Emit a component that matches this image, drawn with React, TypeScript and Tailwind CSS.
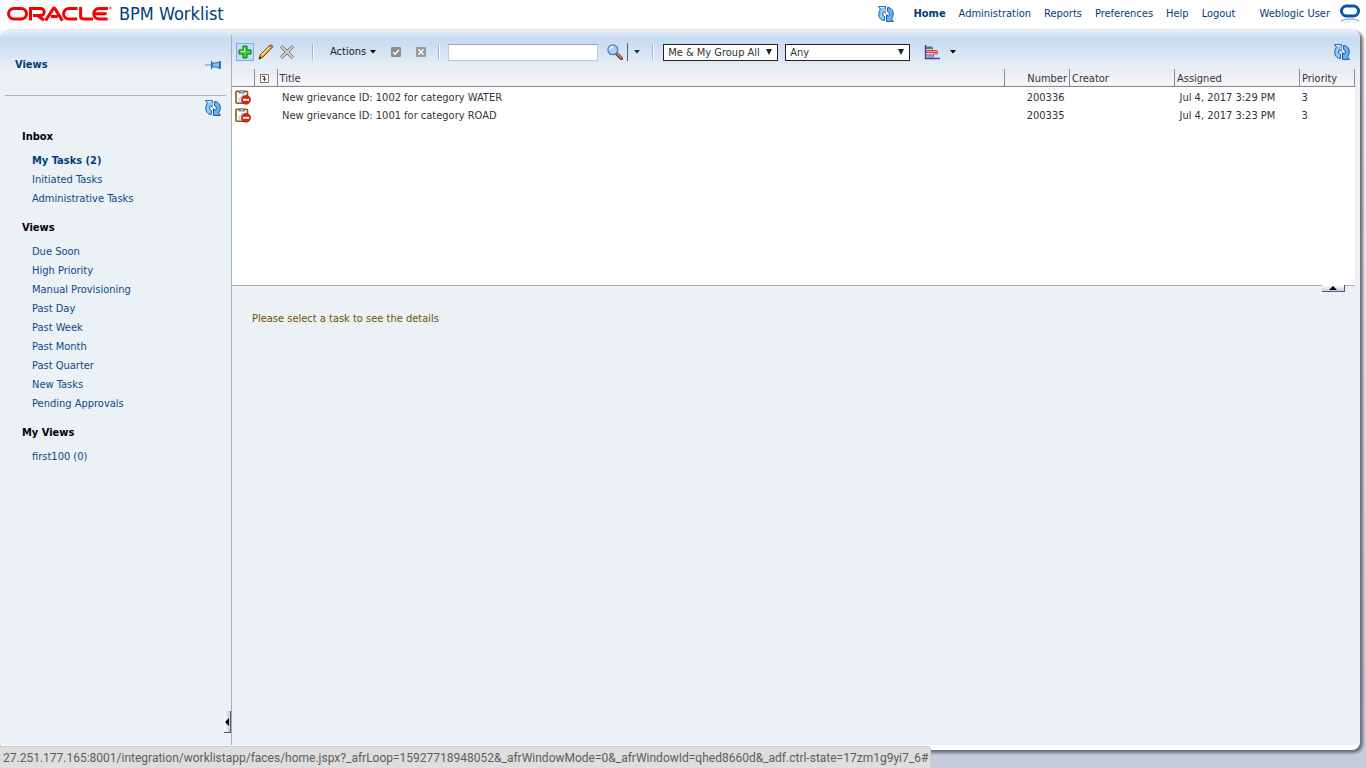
import type { ReactNode } from 'react';

interface IconProps {
  className?: string;
}

interface Task {
  id: string;
  title: string;
  creator: string;
  assigned: string;
  priority: number;
}

interface ViewGroup {
  title: string;
  items: string[];
}

const navLinks = ['Home', 'Administration', 'Reports', 'Preferences', 'Help', 'Logout'];

const viewGroups: ViewGroup[] = [
  { title: 'Inbox', items: ['My Tasks (2)', 'Initiated Tasks', 'Administrative Tasks'] },
  {
    title: 'Views',
    items: [
      'Due Soon',
      'High Priority',
      'Manual Provisioning',
      'Past Day',
      'Past Week',
      'Past Month',
      'Past Quarter',
      'New Tasks',
      'Pending Approvals',
    ],
  },
  { title: 'My Views', items: ['first100 (0)'] },
];

const tasks: Task[] = [
  { id: '200336', title: 'New grievance ID: 1002 for category WATER', creator: '', assigned: 'Jul 4, 2017 3:29 PM', priority: 3 },
  { id: '200335', title: 'New grievance ID: 1001 for category ROAD', creator: '', assigned: 'Jul 4, 2017 3:23 PM', priority: 3 },
];

function OracleLogo() {
  return (
    <svg viewBox="0 0 105 16" className="h-4 w-[105px]" fill="none" stroke="#f80000" strokeWidth="3" role="img" aria-label="Oracle">
      <rect x="1.5" y="2.5" width="18" height="10.6" rx="5.3" />
      <path d="M23.5 14.6V2.5h10.2a3.5 3.5 0 0 1 0 7H26M30.500 9.500l6.500 4.800" />
      <path d="M38.6 14.6 46.2 2.6q.9-1.2 1.8 0l7.4 12M43.8 10.6h7" />
      <path d="M70.5 2.500h-8.600a5.300 5.300 0 0 0 0 10.600h8.200" />
      <path d="M73.6 1v9q0 3.100 3.100 3.100h9.300" />
      <path d="M101 2.500h-9a5.300 5.300 0 0 0 0 10.600h8.600M87.6 7.800h12" />
      <circle cx="103.400" cy="2" r=".9" strokeWidth=".7" />
    </svg>
  );
}

function OracleMark() {
  return (
    <svg viewBox="0 0 20 20" className="h-5 w-5" fill="none">
      <rect x="1.5" y="2" width="17" height="10" rx="5" stroke="#0b57a4" strokeWidth="3" />
      <path d="M1 17.600q2-2.400 5-2.400h8q3 0 5 2.400" stroke="#9ab6d3" strokeWidth="1.600" />
      <path d="M4 18.600q2-1 4-1h4q2 0 4 1" stroke="#dde7f1" />
    </svg>
  );
}

function RefreshIcon() {
  return (
    <svg viewBox="0 0 16 16" className="h-4 w-4" strokeLinejoin="round">
      <path d="M.6.6h6.900v6.600L5.600 5.600C4.200 7 4.300 9.600 6.400 10.400v4.200C.9 14 -.9 8.600 2.400 3.200z" fill="#8fcbfa" stroke="#1d5fae" />
      <path d="M15.400 15.400H8.500V8.800l1.900 1.600c1.400-1.400 1.300-4-.8-4.800V1.400c5.500.6 7.300 6 4 11.400z" fill="#69b2f3" stroke="#1a55a0" />
      <path d="M2 1.500h4.500M8 2.500v5" stroke="#e4f3ff" />
    </svg>
  );
}

function PinIcon() {
  return (
    <svg viewBox="0 0 16 10" className="h-[10px] w-4">
      <path d="M0 5h6" stroke="#5f8fbd" />
      <path d="M6.5.8v8.4M7 3h2.500q2.500.4 5-1.400v6.800Q12 6.600 9.500 7H7z" fill="#7fc0f2" stroke="#1f68ad" />
      <path d="M15.500.8v8.400" stroke="#3c7fc0" />
    </svg>
  );
}

function AddIcon() {
  return (
    <svg viewBox="0 0 16 16" className="h-4 w-4">
      <path d="M6 2h4v4h4v4h-4v4H6v-4H2V6h4z" fill="#3fd63c" stroke="#07720b" strokeLinejoin="round" />
      <path d="M7.500 3.500v4h-4" stroke="#c0f7b5" fill="none" />
    </svg>
  );
}

function PencilIcon() {
  return (
    <svg viewBox="0 0 16 16" className="h-4 w-4" strokeLinejoin="round">
      <path d="M1 15l1.500-4.500L12 1.200q2-.8 2.800 1.500L5.300 12.800z" fill="#f6a62b" stroke="#6b4209" />
      <path d="M3.600 11 12.500 2.500" stroke="#ffe09a" strokeWidth="1.200" />
      <path d="M1 15l.9-2.500 1.600 1.500z" fill="#2a1c08" />
      <path d="M12 1.400q2-.6 2.500 1.300l-1.200 1.300L11 2.400z" fill="#e0665a" />
    </svg>
  );
}

function DeleteIcon() {
  return (
    <svg viewBox="0 0 16 16" className="h-4 w-4">
      <path d="M3.400 1.500 8 6l4.600-4.500 2 2L10 8l4.600 4.500-2 2L8 10l-4.600 4.500-2-2L6 8 1.400 3.500z" fill="#c9c9c9" stroke="#7d7d7d" strokeLinejoin="round" />
    </svg>
  );
}

function ApproveIcon() {
  return (
    <svg viewBox="0 0 10 10" className="h-[10px] w-[10px]">
      <rect width="10" height="10" rx="1" fill="#8d8d8d" />
      <path d="M2.200 5.200 4.200 7.200 8 2.800" stroke="#fff" strokeWidth="1.500" fill="none" />
    </svg>
  );
}

function RejectIcon() {
  return (
    <svg viewBox="0 0 10 10" className="h-[10px] w-[10px]">
      <rect width="10" height="10" rx="1" fill="#9b9b9b" />
      <path d="m2.500 2.500 5 5m0-5-5 5" stroke="#fff" strokeWidth="1.500" />
    </svg>
  );
}

function SearchIcon() {
  return (
    <svg viewBox="0 0 16 16" className="h-4 w-4">
      <path d="m9.500 9.500 5 5" stroke="#6f4327" strokeWidth="3.400" strokeLinecap="round" />
      <path d="m10 9.500 4.500 4.500" stroke="#c68a63" strokeWidth="1.400" strokeLinecap="round" />
      <circle cx="5.800" cy="5.800" r="4.900" fill="#a9d0fb" stroke="#5278b5" strokeWidth="1.300" />
      <path d="M3 5.500Q3.400 3 6 2.800" stroke="#fff" strokeWidth="1.500" fill="none" />
    </svg>
  );
}

function ChartIcon() {
  return (
    <svg viewBox="0 0 16 16" className="h-4 w-4">
      <path d="M2 2.500h6v2.500H2z" fill="#2d7fa8" />
      <path d="M8.500 3.500V6M13.500 7v3H9.500v3H3" stroke="#77757f" fill="none" />
      <path d="M2 6h11v3H2z" fill="#e8401c" />
      <path d="M2 7h11v1H2z" fill="#ff9a80" />
      <path d="M2 10h7v2.500H2z" fill="#9b91cc" />
      <path d="M1.500 1v13.500H16" stroke="#43438c" strokeWidth="1.400" fill="none" />
    </svg>
  );
}

function TaskIcon() {
  return (
    <svg viewBox="0 0 16 16" className="h-4 w-4">
      <rect x="1" y="2.200" width="11.500" height="12" rx="1" fill="#fff" stroke="#8a5a12" strokeWidth="1.600" />
      <path d="M4 4V2.500h1.500q1.200-2.800 2.600 0H9.600V4z" fill="#d5d5d5" stroke="#555" strokeWidth=".8" />
      <path d="m3 8.500 1.500 2L8 5.500M3 12h3.500" stroke="#8db9df" fill="none" />
      <circle cx="11" cy="10.800" r="4.500" fill="#d8230f" stroke="#a3180a" strokeWidth=".6" />
      <path d="M8 10.800h6" stroke="#fff" strokeWidth="2" />
    </svg>
  );
}

function DetachIcon() {
  return (
    <svg viewBox="0 0 9 9" className="h-[9px] w-[9px]">
      <path d="M.5.500h8v8h-8z" fill="#fff" stroke="#777" />
      <path d="M2 2.500h3M4.500 2.500v4" stroke="#444" fill="none" />
      <path d="M2.500 4.500h4l-2 2.800z" fill="#444" />
    </svg>
  );
}

function CaretDown({ className = 'fill-black' }: IconProps) {
  return (
    <svg viewBox="0 0 6 4" className={`h-1 w-[6px] ${className}`}>
      <path d="M0 0h6L3 3.600z" />
    </svg>
  );
}

function ToolButton({ label, children, className = '' }: { label: string; children: ReactNode; className?: string }) {
  return (
    <button type="button" aria-label={label} className={`flex h-[18px] w-[18px] items-center justify-center ${className}`}>
      {children}
    </button>
  );
}

function Separator() {
  return <span className="h-4 w-[2px] border-l border-[#a3b5d0] bg-white" />;
}

function FilterSelect({ label, value, className }: { label: string; value: string; className: string }) {
  return (
    <div className={`relative ${className}`}>
      <select aria-label={label} className="block h-[17px] w-full appearance-none border border-[#222] bg-white pl-1 text-[11px] leading-[15px] text-[#333]">
        <option>{value}</option>
      </select>
      <svg viewBox="0 0 6 6" className="pointer-events-none absolute top-[5px] right-[6px] h-[6px] w-[6px] fill-[#222]">
        <path d="M0 0h6L3 6z" />
      </svg>
    </div>
  );
}

function Header() {
  return (
    <header className="flex h-[30px] items-center justify-between bg-white pr-[6px] pl-[7px]">
      <div className="flex items-center gap-[7px] pb-[3px]">
        <OracleLogo />
        <h1 className="text-[18px] leading-6 text-[#003d7d]">BPM Worklist</h1>
      </div>
      <nav className="flex items-center pb-[3px] text-[#003d7d]">
        <ToolButton label="Refresh" className="mr-[18px]">
          <RefreshIcon />
        </ToolButton>
        <div className="flex gap-[13px]">
          {navLinks.map((link) => (
            <a key={link} href="#" className={link === 'Home' ? 'font-bold' : ''}>
              {link}
            </a>
          ))}
        </div>
        <span className="mr-[10px] ml-6">Weblogic User</span>
        <OracleMark />
      </nav>
    </header>
  );
}

function Sidebar() {
  return (
    <aside className="relative w-[232px] shrink-0 border-r border-[#a6adb3]">
      <div className="mx-[5px] flex h-[61px] items-center justify-between border-b border-[#a9b3c0] pr-[5px] pl-[10px]">
        <h2 className="font-bold text-[#003d7d]">Views</h2>
        <button type="button" aria-label="Pin panel">
          <PinIcon />
        </button>
      </div>
      <div className="flex justify-end pt-[3px] pr-[9px]">
        <ToolButton label="Refresh views">
          <RefreshIcon />
        </ToolButton>
      </div>
      <div className="flex flex-col gap-[10px] pt-[10px] pl-[22px]">
        {viewGroups.map((group) => (
          <section key={group.title}>
            <h3 className="mb-[5px] leading-[19px] font-bold text-black">{group.title}</h3>
            <ul className="pl-[10px]">
              {group.items.map((item, i) => (
                <li key={item} className="leading-[19px]">
                  <a href="#" className={group.title === 'Inbox' && i === 0 ? 'font-bold text-[#003d7d]' : 'text-[#0b4a86]'}>
                    {item}
                  </a>
                </li>
              ))}
            </ul>
          </section>
        ))}
      </div>
      <button
        type="button"
        aria-label="Collapse panel"
        className="absolute right-0 bottom-3 flex h-[22px] w-[7px] items-center justify-center border-r border-b border-[#555a66] bg-linear-to-r from-white to-[#c3d0e6]"
      >
        <svg viewBox="0 0 4 8" className="h-2 w-1 fill-black">
          <path d="M4 0v8L0 4z" />
        </svg>
      </button>
    </aside>
  );
}

function Toolbar() {
  return (
    <div className="flex h-[34px] items-center pr-[9px] pl-[4px] text-[#222]">
      <div className="flex gap-[3px]">
        <ToolButton label="Create" className="border border-[#7fabef] bg-[#c3dafa]">
          <AddIcon />
        </ToolButton>
        <ToolButton label="Edit">
          <PencilIcon />
        </ToolButton>
        <ToolButton label="Delete">
          <DeleteIcon />
        </ToolButton>
      </div>
      <div className="ml-4 flex items-center">
        <Separator />
        <button type="button" className="ml-4 flex items-center gap-1">
          Actions
          <CaretDown />
        </button>
      </div>
      <div className="ml-[11px] flex gap-[7px]">
        <ToolButton label="Approve">
          <ApproveIcon />
        </ToolButton>
        <ToolButton label="Reject">
          <RejectIcon />
        </ToolButton>
      </div>
      <div className="ml-2 flex items-center">
        <Separator />
        <input type="text" aria-label="Search tasks" className="ml-2 h-[17px] w-[150px] border border-[#c3cad3] border-t-[#9ba6b4] bg-white px-1 text-[11px]" />
        <ToolButton label="Search" className="ml-2">
          <SearchIcon />
        </ToolButton>
        <button type="button" aria-label="Search options" className="ml-[3px] flex h-[18px] items-center border-l border-[#4f6079] pr-3 pl-[6px]">
          <CaretDown className="fill-[#0b3a5d]" />
        </button>
        <Separator />
      </div>
      <div className="ml-[9px] flex gap-[7px]">
        <FilterSelect label="Assignee" value="Me & My Group All" className="w-[115px]" />
        <FilterSelect label="Status" value="Any" className="w-[125px]" />
      </div>
      <button type="button" aria-label="Chart" className="ml-[14px] flex items-center gap-[10px]">
        <ChartIcon />
        <CaretDown />
      </button>
      <ToolButton label="Refresh tasks" className="ml-auto">
        <RefreshIcon />
      </ToolButton>
    </div>
  );
}

function TaskTable() {
  return (
    <div className="relative mr-[5px] h-[217px] border-b border-[#a9adb1] bg-white">
      <table className="w-full table-fixed border-collapse text-left text-[#333]">
        <colgroup>
          <col className="w-[22px]" />
          <col className="w-[23px]" />
          <col />
          <col className="w-[65px]" />
          <col className="w-[105px]" />
          <col className="w-[125px]" />
          <col className="w-[55px]" />
        </colgroup>
        <thead>
          <tr className="h-[17px] border-b border-[#868a9b] bg-linear-to-b from-[#e9eaef] to-[#f8f8fa] leading-[13px] *:border-r *:border-[#868a9b] *:px-[2px] *:pt-[3px] *:font-normal">
            <th aria-label="Type" />
            <th>
              <span className="flex pl-[3px]">
                <DetachIcon />
              </span>
            </th>
            <th>Title</th>
            <th className="text-right">Number</th>
            <th>Creator</th>
            <th>Assigned</th>
            <th>Priority</th>
          </tr>
        </thead>
        <tbody>
          {tasks.map((task) => (
            <tr key={task.id} className="h-[18px] leading-[14px] *:pt-1">
              <td className="pl-[3px]">
                <span className="-mt-[2px] flex h-4">
                  <TaskIcon />
                </span>
              </td>
              <td />
              <td className="pl-[5px]">{task.title}</td>
              <td className="pr-[5px] text-right">{task.id}</td>
              <td>{task.creator}</td>
              <td className="pl-[5px]">{task.assigned}</td>
              <td className="pl-[2px]">{task.priority}</td>
            </tr>
          ))}
        </tbody>
      </table>
      <button
        type="button"
        aria-label="Collapse list"
        className="absolute right-[10px] -bottom-[7px] flex h-[7px] w-[23px] items-center justify-center border-r border-b border-[#555a66] bg-linear-to-b from-white to-[#c3d0e6]"
      >
        <svg viewBox="0 0 8 4" className="h-1 w-2 fill-black">
          <path d="M0 4h8L4 0z" />
        </svg>
      </button>
    </div>
  );
}

export default function App() {
  return (
    <div className="flex h-screen flex-col bg-linear-to-b from-white to-[#c6cbd9] font-['DejaVu_Sans_Condensed','Noto_Sans',sans-serif] text-[11px] leading-4">
      <Header />
      <div className="mr-[6px] mb-[18px] flex min-h-0 flex-1 rounded-lg border-b-[5px] border-white bg-[#ebf1f5] bg-[linear-gradient(to_bottom,#e9f1fa_0,#c8dcf3_8px,#cbddf3_14px,#ebf1f5_40px)] pt-[5px] shadow-[2px_2px_3px_1px_#6b7078]">
        <Sidebar />
        <main className="min-w-0 flex-1">
          <Toolbar />
          <TaskTable />
          <p className="px-5 pt-[25px] text-[#6b5306]">Please select a task to see the details</p>
        </main>
      </div>
      <div className="fixed bottom-0 left-0 h-[22px] rounded-tr border-t border-r border-[#c9c9c9] bg-[#dedede] pr-[2px] pl-[3px] font-['Roboto','Open_Sans',sans-serif] text-[12px] leading-[22px] text-[#5c5c5c]">
        27.251.177.165:8001/integration/worklistapp/faces/home.jspx?_afrLoop=15927718948052&_afrWindowMode=0&_afrWindowId=qhed8660d&_adf.ctrl-state=17zm1g9yi7_6#
      </div>
    </div>
  );
}
